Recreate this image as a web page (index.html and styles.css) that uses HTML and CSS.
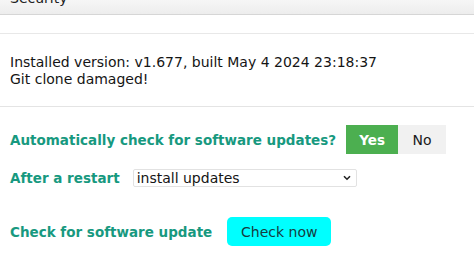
FILE: index.html
```html
<!DOCTYPE html>
<html>
<head>
<meta charset="utf-8">
<link rel="stylesheet" href="styles.css">
</head>
<body>
<div class="tabbar"><span class="tab-title">Security</span></div>
<div class="spacer"></div>
<div class="info">
  <div class="info-line">Installed version: v1.677, built May 4 2024 23:18:37</div>
  <div class="info-line">Git clone damaged!</div>
</div>
<div class="settings">
  <div class="row row-auto">
    <span class="label">Automatically check for software updates?</span>
    <div class="toggle">
      <button class="toggle-btn yes">Yes</button>
      <button class="toggle-btn no">No</button>
    </div>
  </div>
  <div class="row row-restart">
    <span class="label">After a restart</span>
    <div class="select-wrap">
      <select class="select">
        <option>install updates</option>
      </select>
      <svg class="chevron" width="8" height="6" viewBox="0 0 8 6"><path d="M1 1.2 L4 4.2 L7 1.2" fill="none" stroke="#222" stroke-width="1.6"/></svg>
    </div>
  </div>
  <div class="row row-check">
    <span class="label">Check for software update</span>
    <button class="check-btn">Check now</button>
  </div>
</div>
</body>
</html>
```
FILE: styles.css
```css
html, body {
  margin: 0;
  padding: 0;
  background: #ffffff;
}
body {
  font-family: "DejaVu Sans", Verdana, sans-serif;
  font-size: 14px;
  color: #151515;
  overflow: hidden;
}
.tabbar {
  height: 14px;
  background: linear-gradient(#f6f6f6, #ededed);
  border-bottom: 1px solid #d6d6d6;
  padding-left: 10px;
  overflow: hidden;
}
.tab-title {
  display: block;
  line-height: 16px;
  margin-top: -10px;
  color: #222;
}
.spacer {
  height: 18px;
  border-bottom: 1px solid #e8e8e8;
}
.info {
  padding: 20px 10px 18px 10px;
  border-bottom: 1px solid #e4e4e4;
}
.info-line {
  line-height: 17px;
}
.settings {
  padding: 18px 10px 0 10px;
}
.row {
  display: flex;
  align-items: center;
}
.label {
  color: #17997f;
  font-weight: bold;
  font-size: 13.5px;
}
.row-auto {
  gap: 10px;
}
.row-restart {
  gap: 13px;
  margin-top: 15px;
}
.row-check {
  gap: 15px;
  margin-top: 30px;
}
.toggle {
  display: flex;
}
.toggle-btn {
  font-family: inherit;
  font-size: 14px;
  border: none;
  height: 29px;
  margin: 0;
  padding: 0;
}
.yes {
  width: 52px;
  background: #4caf50;
  color: #ffffff;
  font-weight: bold;
  font-size: 13.5px;
}
.no {
  width: 48px;
  background: #f1f1f1;
  color: #1a1a1a;
}
.select-wrap {
  position: relative;
  display: flex;
}
.select {
  appearance: none;
  -webkit-appearance: none;
  width: 224px;
  height: 18px;
  border: 1px solid #e2e2e2;
  border-radius: 2px;
  background: #ffffff;
  font-family: inherit;
  font-size: 14px;
  color: #151515;
  padding: 0 0 0 3px;
  margin: 0;
  line-height: 16px;
}
.chevron {
  position: absolute;
  right: 6px;
  top: 6px;
}
.check-btn {
  font-family: inherit;
  font-size: 14px;
  height: 29px;
  width: 104px;
  border: none;
  border-radius: 5px;
  background: #00ffff;
  color: #163c40;
  padding: 0;
}
```
